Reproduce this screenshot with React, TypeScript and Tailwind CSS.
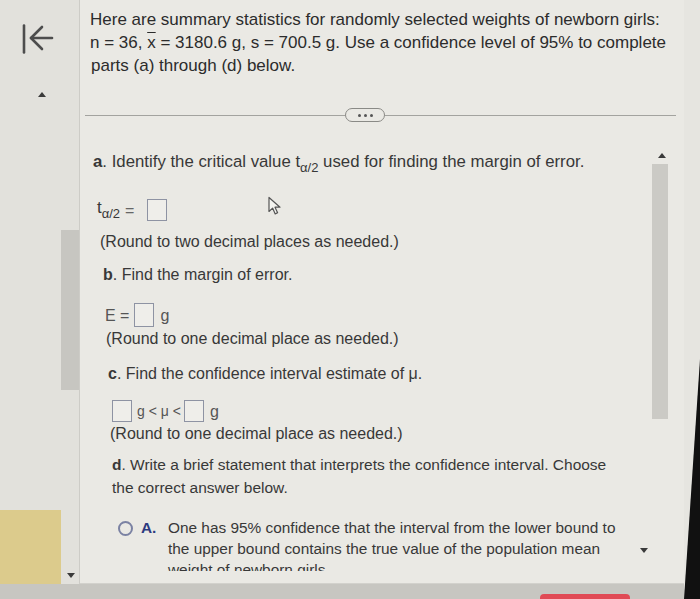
import React from 'react'

function BackIcon() {
  return (
    <svg width="32" height="30" viewBox="0 0 32 30" fill="none" stroke="#4d4d4d" strokeWidth="2.6" strokeLinecap="round" strokeLinejoin="round">
      <path d="M2 1.5v27" />
      <path d="M30 14H9" />
      <path d="M20 3L9 14l11 11" />
    </svg>
  )
}

function Cursor() {
  return (
    <svg width="16" height="20" viewBox="0 0 16 20" fill="#f4f4f0" stroke="#555" strokeWidth="1.2" strokeLinejoin="round">
      <path d="M2 1.5v14l3.6-3.4 2.6 5.8 2.4-1.1-2.6-5.6h5z" />
    </svg>
  )
}

function Box({ className = '' }: { className?: string }) {
  return <span className={`inline-block w-[20px] h-[22px] border-[1.5px] border-[#8e93a3] bg-[#efeeea] ${className}`} />
}

function Sub({ children }: { children: React.ReactNode }) {
  return <span className="text-[13px] align-[-5px]">{children}</span>
}

const up = 'w-0 h-0 border-x-[4px] border-x-transparent border-b-[5px] border-b-[#3a3a3a]'
const down = 'w-0 h-0 border-x-[4px] border-x-transparent border-t-[5px] border-t-[#3a3a3a]'

export default function App() {
  return (
    <div className="w-[700px] h-[599px] overflow-hidden flex bg-[#e6e5e0] font-['Liberation_Sans',Arial,sans-serif] text-[#383838]">
      <div className="flex-1 flex flex-col">
        <div className="flex-1 flex min-h-0">
          {/* Left gutter */}
          <div className="w-[80px] flex border-r border-[#cdccc7] bg-[#e2e1dc]">
            <div className="w-[62px] flex flex-col">
              <div className="mt-[24px] ml-[22px]">
                <BackIcon />
              </div>
              <div className={`mt-[38px] ml-[38px] ${up}`} />
              <div className="flex-1" />
              <div className="h-[74px] bg-[#dccb8c]" />
            </div>
            <div className="w-[18px] flex flex-col">
              <div className="mt-[230px] h-[160px] bg-[#c7c6c1]" />
              <div className="flex-1" />
              <div className={`mb-[6px] ml-[6px] ${down}`} />
            </div>
          </div>

          {/* Main */}
          <div className="flex-1 flex flex-col bg-[#eae9e4] border-b border-[#d2d1cc]">
            <div className="pt-[8px] pl-[10px] text-[17px] leading-[23px] text-[#2c2c2c]">
              <div>Here are summary statistics for randomly selected weights of newborn girls:</div>
              <div>
                n = 36, <span className="overline">x</span> = 3180.6 g, s = 700.5 g. Use a confidence level of 95% to complete
              </div>
              <div className="ml-[1px]">parts (a) through (d) below.</div>
            </div>

            <div className="mt-[31px] ml-[5px] w-[591px] h-[14px] flex items-center">
              <div className="w-[260px] h-px bg-[#a3a39f]" />
              <div className="w-[40px] h-[14px] rounded-full border border-[#8a8a86] flex items-center justify-center gap-[3px]">
                <span className="w-[3px] h-[3px] rounded-full bg-[#555]" />
                <span className="w-[3px] h-[3px] rounded-full bg-[#555]" />
                <span className="w-[3px] h-[3px] rounded-full bg-[#555]" />
              </div>
              <div className="flex-1 h-px bg-[#a3a39f]" />
            </div>

            <div className="flex-1 flex min-h-0">
              <div className="flex-1 flex flex-col text-[16px] leading-[23px]">
                <div className="mt-[28px] ml-[13px] h-[23px] text-[16.8px] whitespace-nowrap">
                  <b>a</b>. Identify the critical value t<Sub>α/2</Sub> used for finding the margin of error.
                </div>
                <div className="mt-[25px] ml-[17px] h-[24px] flex items-center">
                  <span className="text-[17px]">t<Sub>α/2</Sub></span>
                  <span className="ml-[5px] text-[#666]">=</span>
                  <Box className="ml-[13px]" />
                  <span className="ml-[100px] -mt-[8px]"><Cursor /></span>
                </div>
                <div className="mt-[8px] ml-[20px]">(Round to two decimal places as needed.)</div>
                <div className="mt-[10px] ml-[23px]"><b>b</b>. Find the margin of error.</div>
                <div className="mt-[17px] ml-[25px] h-[24px] flex items-center text-[#555]">
                  <span>E =</span>
                  <Box className="ml-[5px] h-[24px]" />
                  <span className="ml-[6px]">g</span>
                </div>
                <div className="ml-[26px]">(Round to one decimal place as needed.)</div>
                <div className="mt-[12px] ml-[28px]"><b>c</b>. Find the confidence interval estimate of μ.</div>
                <div className="mt-[15px] ml-[32px] h-[22px] flex items-center text-[#555]">
                  <Box className="w-[18px]" />
                  <span className="ml-[5px] text-[14px]">g &lt; μ &lt;</span>
                  <Box className="ml-[3px] w-[18px]" />
                  <span className="ml-[6px]">g</span>
                </div>
                <div className="ml-[30px]">(Round to one decimal place as needed.)</div>
                <div className="mt-[8px] ml-[32px] text-[15.5px]">
                  <div>
                    <b>d</b>. Write a brief statement that interprets the confidence interval. Choose
                  </div>
                  <div>the correct answer below.</div>
                </div>
                <div className="mt-[6px] ml-[38px] h-[66px] overflow-hidden text-[15.4px]">
                  <div className="pt-[12px] flex leading-[21px]">
                    <span className="mt-[4px] w-[15px] h-[15px] rounded-full border-2 border-[#7b82a3] shrink-0" />
                    <b className="ml-[8px] text-[#2c3a80] w-[27px] shrink-0">A.</b>
                    <div>
                      <div>One has 95% confidence that the interval from the lower bound to</div>
                      <div>the upper bound contains the true value of the population mean</div>
                      <div>weight of newborn girls.</div>
                    </div>
                  </div>
                </div>
              </div>

              {/* Right scrollbar */}
              <div className="w-[30px] mr-[14px] flex flex-col">
                <div className={`mt-[31px] self-end mr-[4px] ${up}`} />
                <div className="mt-[6px] ml-[12px] w-[16px] h-[255px] bg-[#cbcac5]" />
                <div className="flex-1" />
                <div className={`mb-[30px] ml-[0px] ${down}`} />
              </div>
            </div>
          </div>
        </div>

        <div className="h-[15px] bg-[#c7c6c1] flex flex-col justify-end">
          <div className="ml-[540px] w-[90px] h-[5px] rounded-t-sm bg-[#e04a55]" />
        </div>
      </div>

      {/* Screen edge */}
      <div className="w-[16px] flex flex-col bg-[#e6e5e0]">
        <div className="flex-1" />
        <div className="h-[240px] bg-[#111] [clip-path:polygon(100%_0,100%_100%,0_100%)]" />
      </div>
    </div>
  )
}
